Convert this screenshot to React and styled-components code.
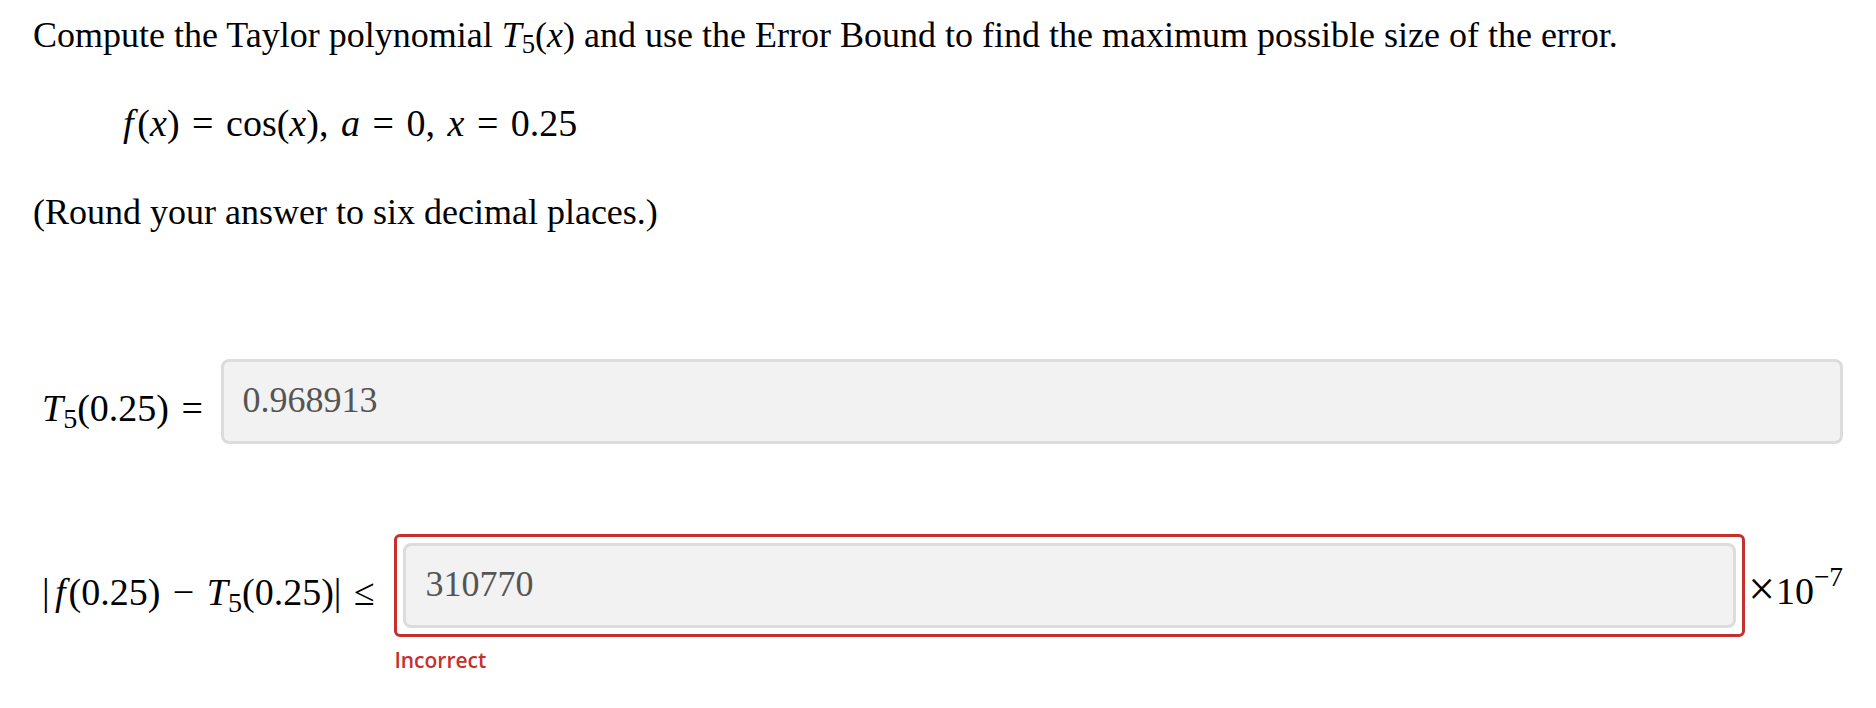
import React from "react";
import styled, { createGlobalStyle } from "styled-components";

const GlobalStyle = createGlobalStyle`
  html, body {
    margin: 0;
    padding: 0;
    background: #fff;
  }
  body {
    font-family: "Liberation Serif", "Times New Roman", serif;
    color: #000;
  }
`;

const Page = styled.div`
  width: 1876px;
  box-sizing: border-box;
  padding: 15px 33px 0 33px;
`;

const Prompt = styled.p`
  margin: 0;
  font-size: 36px;
  line-height: 40px;
`;

const Equation = styled.div`
  margin: 46px 0 0 90px;
  font-size: 38px;
  line-height: 44px;
  word-spacing: 0.08em;
`;

const Note = styled(Prompt)`
  margin-top: 47px;
`;

const Mi = styled.i`
  font-style: italic;
  margin-right: ${(p) => p.$r || 0}em;
`;

const Sub = styled.sub`
  font-size: 74%;
  font-style: normal;
  line-height: 0;
  vertical-align: -0.24em;
`;

const Sup = styled.sup`
  font-size: 72%;
  line-height: 0;
  vertical-align: 0.66em;
`;

const Rel = styled.span`
  margin: 0 0.33em;
`;

const Times = styled.span`
  font-size: 125%;
  line-height: 0;
  vertical-align: -0.04em;
  margin-right: 0.02em;
`;

const Bar = styled.span`
  margin-right: 0.14em;
`;

const Row = styled.div`
  display: grid;
  grid-template-columns: auto 1fr ${(p) => (p.$suffix ? "auto" : "")};
  align-items: center;
  column-gap: ${(p) => p.$gap}px;
  padding-left: 9px;
  margin-top: ${(p) => p.$top}px;
`;

const Label = styled.div`
  font-size: 38px;
  line-height: 44px;
  white-space: nowrap;
  padding-top: 12px;
  margin-right: -12px;
`;

const Field = styled.div`
  box-sizing: border-box;
  height: 85px;
  display: flex;
  align-items: center;
  padding: 0 0 4px 19px;
  background: #f2f2f2;
  border: 3px solid #dcdcdc;
  border-radius: 8px;
  font-size: 36px;
  color: #555;
`;

const Marked = styled.div`
  border: 3px solid #c5302d;
  border-radius: 6px;
  padding: 6px;
`;

const Suffix = styled.div`
  font-size: 38px;
  line-height: 44px;
  white-space: nowrap;
  padding-top: 10px;
  margin-left: -16px;
`;

const Message = styled.div`
  grid-column: 2;
  margin-top: 9px;
  font-family: "Open Sans", "Noto Sans", sans-serif;
  font-weight: 600;
  font-size: 21px;
  line-height: 28px;
  color: #c5302d;
`;

export default function App() {
  return (
    <>
      <GlobalStyle />
      <Page>
        <Prompt>
          Compute the Taylor polynomial <Mi>T</Mi>
          <Sub>5</Sub>(<Mi>x</Mi>) and use the Error Bound to find the maximum
          possible size of the error.
        </Prompt>
        <Equation>
          <Mi $r={0.1}>f</Mi>(<Mi>x</Mi>)<Rel>=</Rel>cos(<Mi>x</Mi>),{" "}
          <Mi>a</Mi>
          <Rel>=</Rel>0, <Mi>x</Mi>
          <Rel>=</Rel>0.25
        </Equation>
        <Note>(Round your answer to six decimal places.)</Note>

        <Row $top={127} $gap={17}>
          <Label>
            <Mi>T</Mi>
            <Sub>5</Sub>(0.25)<Rel>=</Rel>
          </Label>
          <Field>0.968913</Field>
        </Row>

        <Row $top={90} $gap={19} $suffix>
          <Label>
            <Bar>|</Bar>
            <Mi $r={0.08}>f</Mi>(0.25)<Rel>−</Rel>
            <Mi>T</Mi>
            <Sub>5</Sub>(0.25)|<Rel>≤</Rel>
          </Label>
          <Marked>
            <Field>310770</Field>
          </Marked>
          <Suffix>
            <Times>×</Times>10<Sup>−7</Sup>
          </Suffix>
          <Message>Incorrect</Message>
        </Row>
      </Page>
    </>
  );
}
